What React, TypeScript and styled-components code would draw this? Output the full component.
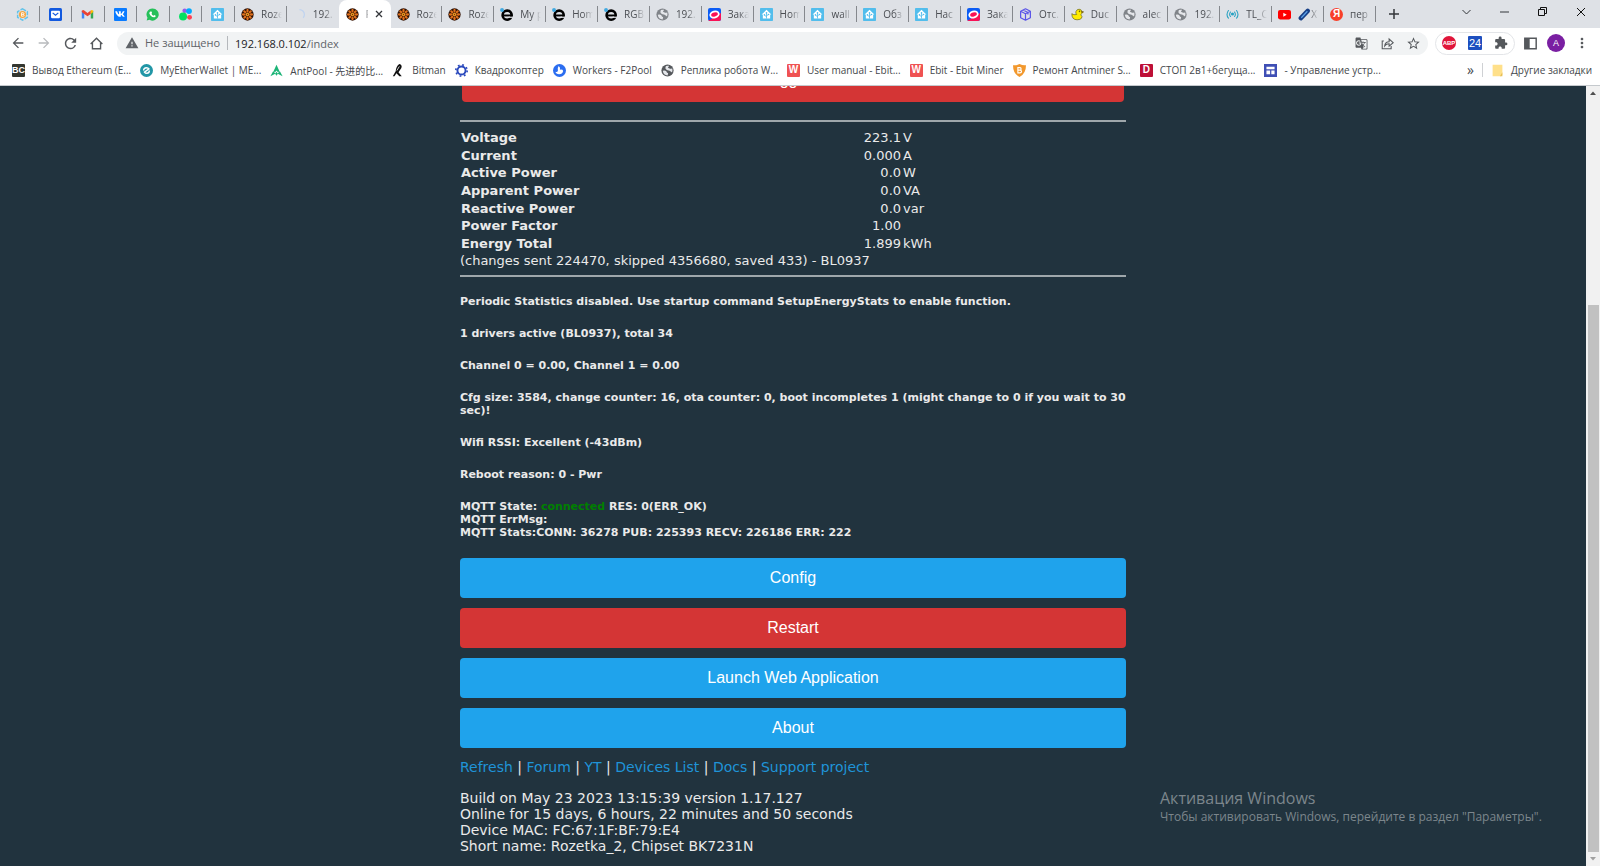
import React from 'react';
import styled, { createGlobalStyle, css } from 'styled-components';
import { MdArrowBack, MdArrowForward, MdRefresh, MdWarning, MdGTranslate, MdStarBorder, MdExtension, MdMoreVert } from 'react-icons/md';
import { FaVk } from 'react-icons/fa';

const uiFont = '"Open Sans", "Noto Sans", "Noto Sans CJK SC", sans-serif';
const pageFont = '"DejaVu Sans", Verdana, sans-serif';

const GlobalStyle = createGlobalStyle`
  * { box-sizing: border-box; }
  body { margin: 0; background: #21333e; }
  button, input { font: inherit; border: 0; padding: 0; margin: 0; background: none; color: inherit; }
`;

/* ---------- browser chrome ---------- */

const Window = styled.div`
  display: flex;
  flex-direction: column;
  height: 100vh;
  overflow: hidden;
  font-family: ${uiFont};
`;

const TabStrip = styled.div`
  display: flex;
  align-items: stretch;
  height: 28px;
  padding-left: 7px;
  background: #dee1e6;
  color: #4a4d52;
  font-size: 10px;
`;

const TabGroup = styled.div<{ $basis: number }>`
  display: flex;
  flex: 0 1 ${p => p.$basis}px;
  min-width: 0;
`;

const Tab = styled.button<{ $active?: boolean; $pinned?: boolean; $plain?: boolean }>`
  position: relative;
  flex: 1 1 30px;
  min-width: 0;
  display: flex;
  align-items: center;
  gap: 7px;
  padding: ${p => (p.$pinned ? '0 9px' : '0 4px 0 6px')};
  border-radius: 8px 8px 0 0;
  text-align: left;
  ${p => p.$active && css`background: #fff; padding: 0 8px 0 7px;`}
  ${p => !p.$active && !p.$plain && css`
    &::after {
      content: '';
      position: absolute;
      right: 0;
      top: 6px;
      width: 1px;
      height: 16px;
      background: #85888d;
    }
  `}
`;

const TabTitle = styled.span`
  display: flex;
  align-items: center;
  flex: 1;
  min-width: 0;
  overflow: hidden;
  white-space: nowrap;
  mask-image: linear-gradient(90deg, #000 50%, transparent 95%);
`;

const StripButton = styled.button<{ $width: number }>`
  display: flex;
  align-items: center;
  justify-content: center;
  width: ${p => p.$width}px;
  color: #33363a;
`;

const WindowControls = styled.div`
  display: flex;
  height: 24px;
  margin-left: auto;
`;

const Toolbar = styled.div`
  display: flex;
  align-items: center;
  height: 30px;
  padding: 0 5px;
  background: #fff;
  color: #5f6368;
`;

const ToolButton = styled.button<{ $dim?: boolean }>`
  display: flex;
  align-items: center;
  justify-content: center;
  width: 26px;
  height: 24px;
  flex: none;
  color: ${p => (p.$dim ? '#b8babd' : '#55585c')};
`;

const AddressBar = styled.div`
  display: flex;
  align-items: center;
  flex: 1;
  height: 23px;
  margin: 0 7px 0 8px;
  padding: 0 2px 0 8px;
  border-radius: 12px;
  background: #f1f3f4;
  font-size: 11px;
`;

const Security = styled.button`
  display: flex;
  align-items: center;
  gap: 6px;
  padding-right: 7px;
  border-right: 1px solid #b5b8bc;
  line-height: 14px;
  color: #5f6368;
`;

const AddressInput = styled.input`
  field-sizing: content;
  margin-left: 7px;
  color: #202124;
  outline: 0;
`;

const AddressPath = styled.span`
  flex: 1;
`;

const ExtensionGroup = styled.div`
  display: flex;
  align-items: center;
  height: 23px;
  margin-right: 2px;
  border: 1px solid #e3e5e8;
  border-radius: 12px;
`;

const Badge = styled.span<{ $bg: string; $round?: boolean; $size?: number; $font?: number; $light?: boolean }>`
  display: flex;
  align-items: center;
  justify-content: center;
  flex: none;
  width: ${p => p.$size ?? 13}px;
  height: ${p => p.$size ?? 13}px;
  border-radius: ${p => (p.$round ? '50%' : '1px')};
  background: ${p => p.$bg};
  color: #fff;
  font-family: "Liberation Sans", sans-serif;
  font-weight: ${p => (p.$light ? 400 : 700)};
  font-size: ${p => p.$font ?? 10}px;
  line-height: 1;
`;

const Bookmarks = styled.nav`
  display: flex;
  align-items: center;
  gap: 9px;
  height: 28px;
  padding: 0 8px 3px 12px;
  border-bottom: 1px solid #c5c9cd;
  background: #fff;
  font-size: 10px;
`;

const Bookmark = styled.a`
  display: flex;
  align-items: center;
  gap: 7px;
  flex: none;
  color: #45484c;
  white-space: nowrap;
  text-decoration: none;
`;

const Overflow = styled.div`
  display: flex;
  align-items: center;
  gap: 8px;
  margin-left: auto;
  color: #45484c;
`;

const MoreBookmarks = styled.button`
  font-size: 14px;
  line-height: 14px;
`;

const Divider = styled.span`
  flex: none;
  width: 1px;
  height: 14px;
  background: #cfd1d4;
`;

/* ---------- page ---------- */

const Viewport = styled.div`
  position: relative;
  display: flex;
  flex: 1;
  min-height: 0;
  background: #21333e;
`;

const Scroller = styled.main`
  display: flex;
  flex: 1;
  flex-direction: column;
  justify-content: flex-end;
  align-items: center;
  overflow: hidden;
`;

const Content = styled.div`
  flex: none;
  width: 42%;
  min-width: 660px;
  padding-bottom: 12px;
  color: #eaeaea;
  font-family: ${pageFont};
  font-size: 13px;
  line-height: 16px;
`;

const ActionButton = styled.button<{ $danger?: boolean; $tall?: boolean }>`
  display: block;
  width: 100%;
  height: ${p => (p.$tall ? 44 : 40)}px;
  border-radius: 4px;
  background: ${p => (p.$danger ? '#d43535' : '#1fa3ec')};
  color: #fff;
  font-family: "Liberation Sans", Arial, sans-serif;
  font-size: 16px;
`;

const ToggleRow = styled.div`
  padding: 0 2px;
  margin-bottom: 18px;
`;

const Rule = styled.hr`
  height: 2px;
  margin: 0;
  border: 0;
  background: #9fa7ab;
`;

const Readings = styled.table`
  width: 100%;
  height: 123px;
  margin-top: 7px;
  border-collapse: collapse;
  table-layout: fixed;
  line-height: 17px;
  th, td { padding: 0 1px; text-align: left; }
`;

const Value = styled.td`
  && { text-align: right; }
`;

const Summary = styled.p`
  margin: 0 0 5px;
  line-height: 18px;
`;

const Status = styled.section`
  display: flex;
  flex-direction: column;
  gap: 19px;
  padding: 18px 0 19px;
`;

const StatusLine = styled.h5`
  margin: 0;
  font-size: 11px;
  line-height: 13px;
`;

const Connected = styled.span`
  color: #008000;
`;

const Actions = styled.div`
  display: flex;
  flex-direction: column;
  gap: 10px;
`;

const Links = styled.p`
  margin: 11px 0 15px;
  font-size: 14px;
`;

const PageLink = styled.a`
  color: #1f94d8;
  text-decoration: none;
`;

const BuildInfo = styled.p`
  margin: 0;
  font-size: 14px;
`;

const Watermark = styled.aside`
  position: absolute;
  right: 60px;
  bottom: 41px;
  width: 380px;
  color: #7c868c;
  font-size: 12px;
  line-height: 16px;
  white-space: nowrap;
`;

const WatermarkTitle = styled.div`
  font-size: 16px;
  line-height: 22px;
`;

const ScrollTrack = styled.div`
  display: flex;
  flex-direction: column;
  align-items: center;
  width: 14px;
  background: #f1f1f1;
`;

const ScrollArrow = styled.svg`
  flex: none;
  width: 14px;
  height: 14px;
`;

const ScrollSpace = styled.div`
  flex: 205 1 0;
`;

const ScrollThumb = styled.div`
  flex: 547 1 0;
  width: 11px;
  background: #c1c1c1;
`;

/* ---------- drawings ---------- */

const Icon = styled.svg`
  flex: none;
  width: 13px;
  height: 13px;
`;

const Bulb = () => (
  <Icon viewBox="0 0 16 16" fill="none">
    <path d="M8 1l6 3.500v7L8 15l-6-3.500v-7z" stroke="#62c3e8" strokeWidth="1.800" strokeDasharray="5 1.500" />
    <circle cx="8" cy="8" r="4.400" fill="#f4a640" />
    <path d="M6.800 5.800h2q1 .1 1 1t-1 1.100q1.200.1 1.200 1.100t-1.200 1.100h-2zM6.800 7.900h2" stroke="#fff" />
  </Icon>
);
const Mail = () => (
  <Icon viewBox="0 0 16 16"><rect width="16" height="16" rx="2" fill="#1259df" /><rect x="2.500" y="3.500" width="11" height="9" rx="1" fill="#fff" /><path d="M4.500 6L8 9l3.500-3" fill="none" stroke="#1259df" strokeWidth="1.500" /></Icon>
);
const Gmail = () => (
  <Icon viewBox="0 0 16 16">
    <path d="M1 3.500V13h3V6z" fill="#4285f4" /><path d="M15 3.500V13h-3V6z" fill="#34a853" />
    <path d="M1 3.500Q2.500 2 4 3l4 3.200L12 3v4.300L8 10.300 4 7.300 1 5z" fill="#ea4335" /><path d="M12 3q1.600-1 3 .5V5l-3 2.300z" fill="#fbbc04" />
  </Icon>
);
const Vk = () => <Badge $bg="#0a7bff"><FaVk size={10} /></Badge>;
const WhatsApp = () => (
  <Icon viewBox="0 0 16 16"><path d="M8 .5a7.500 7.500 0 11-3.600 14L.8 15.500l1-3.500A7.500 7.500 0 018 .5z" fill="#25c05a" /><path d="M5.500 4.200l1.300.2.7 1.800-.8 1q.9 1.700 2.500 2.300l.9-1 1.800.9q.1 2-1.900 2-2.500 0-4.500-2.300T4.200 5.800q.2-1.200 1.300-1.600z" fill="#fff" /></Icon>
);
const Dots = () => (
  <Icon viewBox="0 0 16 16"><circle cx="7" cy="3.500" r="2.800" fill="#965eeb" /><circle cx="12.300" cy="3.800" r="3.600" fill="#00aaff" /><circle cx="5" cy="10.500" r="4.900" fill="#04e061" /><circle cx="13" cy="11.500" r="3" fill="#ff4053" /></Icon>
);
const HomeAssistant = () => (
  <Icon viewBox="0 0 16 16">
    <rect width="16" height="16" rx="1" fill="#52bdec" /><path d="M8 2l6 6h-1.500v5h-9V8H2z" fill="#fff" />
    <path d="M8 13V6M8 11l-2.500-2.500M8 10l2.500-2.500" stroke="#52bdec" fill="none" /><circle cx="8" cy="6" r="1" fill="#52bdec" /><circle cx="5.500" cy="8.500" r="1" fill="#52bdec" /><circle cx="10.500" cy="8" r="1" fill="#52bdec" />
  </Icon>
);
const Flower = () => (
  <Icon viewBox="0 0 16 16">
    <circle cx="8" cy="8" r="7.600" fill="#2e1206" />
    {[0, 45, 90, 135, 180, 225, 270, 315].map(a => (
      <ellipse key={a} cx="8" cy="3.300" rx="1.400" ry="2.300" fill="#e0701c" transform={`rotate(${a} 8 8)`} />
    ))}
    <circle cx="8" cy="8" r="2.200" fill="#f0a021" /><circle cx="8" cy="8" r=".8" fill="#7a2d10" />
  </Icon>
);
const Spinner = () => <Icon viewBox="0 0 16 16" fill="none"><path d="M8 2a6 6 0 016 6 6 6 0 01-1.500 4" stroke="#bfd3f0" strokeWidth="1.500" /></Icon>;
const EdgeE = () => (
  <Icon viewBox="0 0 16 16" fill="none">
    <circle cx="8.800" cy="8.800" r="5.600" stroke="#000" strokeWidth="3.200" /><path d="M4 9.200h11" stroke="#000" strokeWidth="2.400" /><path d="M10.500 11.400h6" stroke="#dee1e6" strokeWidth="1.500" /><circle cx="2.500" cy="2.500" r="2.400" fill="#42a9e0" />
  </Icon>
);
const Globe = ({ color = '#808489' }: { color?: string }) => (
  <Icon viewBox="0 0 16 16"><circle cx="8" cy="8" r="7.500" fill={color} /><path d="M2.200 8.300q3-.8 4.600.8.200 1.800 2 2l-.6 2.900Q3 14 2.200 8.300zM6 2.500q2-.8 4-.2L8.500 4.500l2.700 1.300q1.400.2 2.600-.6.800 2.300-.2 5.200l-3-2.200-3.500-.8-1.800-2.200z" fill="#e4e6ea" /></Icon>
);
const Ozon = () => (
  <Icon viewBox="0 0 16 16"><rect width="16" height="16" rx="2.500" fill="#0b5cf5" /><path d="M0 16L16 6v7.500q0 2.500-2.500 2.500z" fill="#f91155" /><ellipse cx="8" cy="8" rx="5.300" ry="3.600" transform="rotate(-15 8 8)" fill="#f91155" stroke="#fff" strokeWidth="2.200" /></Icon>
);
const Cube = () => (
  <Icon viewBox="0 0 16 16" fill="none" stroke="#5b54e8" strokeWidth="1.500" strokeLinejoin="round"><path d="M8 1l6 3v8l-6 3-6-3V4zM2 4l6 3 6-3M8 7v8M5 2.500l6 3V8" /></Icon>
);
const Duck = () => (
  <Icon viewBox="0 0 16 16" stroke="#5e5a10" strokeWidth=".8"><path d="M1 7q2 2 6 1-1.500-1.500-1-3.500Q7 1.500 10 1.500T13.500 5q0 2-1.500 3.500 2.500 1.500 1 4-1.500 2-5.500 2Q1 14.500 1 7z" fill="#ffed00" /><path d="M13 4l2.500.8L13.500 6z" fill="#f28c1d" /><circle cx="10.500" cy="4" r=".6" fill="#000" /></Icon>
);
const Signal = () => (
  <Icon viewBox="0 0 16 16" fill="none" stroke="#25a1c2" strokeWidth="1.300" strokeLinecap="round"><path d="M3 3Q-.5 8 3 12.500M13 3q3.500 5 0 9.500M5.500 5q-2 3 0 5.500M10.500 5q2 3 0 5.500" /><circle cx="8" cy="7.500" r="1.200" fill="#25a1c2" /></Icon>
);
const YouTube = () => <Icon viewBox="0 0 16 16"><rect y="2.500" width="16" height="11.500" rx="2.500" fill="#f00" /><path d="M6.500 5.800v4.900l4.200-2.450z" fill="#fff" /></Icon>;
const Clip = () => <Icon viewBox="0 0 16 16" fill="none"><path d="M3.500 12.500L12 3.500" stroke="#173f86" strokeWidth="5.500" strokeLinecap="round" /><path d="M4 12l7.500-8" stroke="#5ea2e8" strokeWidth="1.500" /></Icon>;
const Home = () => <Icon viewBox="0 0 16 16" fill="none" stroke="currentColor" strokeWidth="1.700"><path d="M.8 8.500L8 1.500l7.200 7M3 7v7.500h10V7" /></Icon>;
const Share = () => <Icon viewBox="0 0 16 16" fill="none" stroke="currentColor" strokeWidth="1.300"><path d="M3.500 5H1.500v9.500h11V11M4.500 11q.5-5 5.500-5.200V2.500L15 7l-5 4.200V8.300Q6.500 8.300 4.500 11z" /></Icon>;
const SidePanel = () => <Icon viewBox="0 0 16 16"><path d="M1 1.500h14v13H1z" fill="none" stroke="currentColor" strokeWidth="1.800" /><path d="M1 1.500h6v13H1z" fill="currentColor" /></Icon>;
const Ring = () => <Icon viewBox="0 0 16 16" fill="none"><circle cx="8" cy="8" r="8" fill="#2196a6" /><path d="M4.500 8q0-3.500 3.500-3.500 2 0 3 1.500L5.500 10q1 1.500 3 1.500 3 0 3-3.500" stroke="#fff" strokeWidth="1.800" /></Icon>;
const Ant = () => <Icon viewBox="0 0 16 16"><path d="M8 1l3.500 7.500-1.500 2L8 8l-2 2.500-1.500-2zM4 8.500L6.500 12 .5 15zM12 8.500L9.500 12l6 3zM8 9.500l1.700 2.500L8 14.500 6.300 12z" fill="#1cb477" /></Icon>;
const Antbit = () => <Icon viewBox="0 0 16 16"><path d="M9 0q4 1 2.500 5L8 10l4 5h-3L5.500 11.500 3 15H1l3.500-6Q5 3 9 0z" fill="#111" /><path d="M9 3L6 8" stroke="#fff" /></Icon>;
const Drone = () => <Icon viewBox="0 0 16 16" fill="none" stroke="#2a49bd"><circle cx="8" cy="8" r="5" strokeWidth="2.400" /><circle cx="8" cy="8" r="7" strokeWidth="2" strokeDasharray="2.200 3.300" /></Icon>;
const F2Pool = () => <Icon viewBox="0 0 16 16"><circle cx="8" cy="8" r="8" fill="#2b6df0" /><path d="M7 2.500q2.500 2 1.500 4.500 3.500-.5 4 1.500-1 4-5 4-4 0-4.500-3Q5 10.500 6 8.500q-1-3.500 1-6z" fill="#fff" /></Icon>;
const Shield = () => <Icon viewBox="0 0 16 16"><path d="M0 1.500Q4 2 8 0q4 2 8 1.500Q16 12 8 16 0 12 0 1.500z" fill="#f2982d" /><path d="M6 4.500h2.500q1.500.2 1.500 1.500T8.500 7.500q2 .2 2 1.800T8.500 11H6zM6 7.500h2.500" fill="none" stroke="#fff" strokeWidth="1.400" /></Icon>;
const Board = () => <Icon viewBox="0 0 16 16"><rect width="16" height="16" fill="#3f4fb5" /><path d="M3 3.500h10v3H3zM3 8h4.500v4.500H3zM9 8h4v4.500H9z" fill="#fff" /></Icon>;
const Folder = () => <Icon viewBox="0 0 16 16"><path d="M2 1h12v12l-2 2H2z" fill="#ffe08a" /><path d="M14 10v5h-3z" fill="#e8bf55" /></Icon>;

/* ---------- data ---------- */

const pinned: [string, React.ReactNode][] = [
  ['Mining', <Bulb />], ['Mail', <Mail />], ['Gmail', <Gmail />], ['VK', <Vk />],
  ['WhatsApp', <WhatsApp />], ['Avito', <Dots />], ['Home Assistant', <HomeAssistant />],
];

type TabData = { icon: React.ReactNode; title: React.ReactNode; active?: boolean; plain?: boolean };
const tabs: TabData[] = [
  { icon: <Flower />, title: 'Roze' },
  { icon: <Spinner />, title: '192.', plain: true },
  { icon: <Flower />, title: 'R', active: true },
  { icon: <Flower />, title: 'Roze' },
  { icon: <Flower />, title: 'Roze' },
  { icon: <EdgeE />, title: 'My p' },
  { icon: <EdgeE />, title: 'Hom' },
  { icon: <EdgeE />, title: 'RGB' },
  { icon: <Globe />, title: '192.' },
  { icon: <Ozon />, title: 'Зака' },
  { icon: <HomeAssistant />, title: 'Hom' },
  { icon: <HomeAssistant />, title: 'wall' },
  { icon: <HomeAssistant />, title: 'Обз' },
  { icon: <HomeAssistant />, title: 'Нас' },
  { icon: <Ozon />, title: 'Зака' },
  { icon: <Cube />, title: 'Отс.' },
  { icon: <Duck />, title: 'Duc' },
  { icon: <Globe />, title: 'alec' },
  { icon: <Globe />, title: '192.' },
  { icon: <Signal />, title: 'TL_C' },
  { icon: <YouTube />, title: <><Clip />Х</> },
  { icon: <Badge $bg="#f8402a" $round>Я</Badge>, title: 'пер' },
];

const bookmarks: [React.ReactNode, string][] = [
  [<Badge $bg="#33362f" $font={9}>BC</Badge>, 'Вывод Ethereum (E...'],
  [<Ring />, 'MyEtherWallet | ME...'],
  [<Ant />, 'AntPool - 先进的比...'],
  [<Antbit />, 'Bitman'],
  [<Drone />, 'Квадрокоптер'],
  [<F2Pool />, 'Workers - F2Pool'],
  [<Globe color="#55585c" />, 'Реплика робота W...'],
  [<Badge $bg="#ef5252">W</Badge>, 'User manual - Ebit...'],
  [<Badge $bg="#ef5252">W</Badge>, 'Ebit - Ebit Miner'],
  [<Shield />, 'Ремонт Antminer S...'],
  [<Badge $bg="#bd0f36">D</Badge>, 'СТОП 2в1+бегуща...'],
  [<Board />, '- Управление устр...'],
];

const readings = [
  ['Voltage', '223.1', 'V'], ['Current', '0.000', 'A'], ['Active Power', '0.0', 'W'], ['Apparent Power', '0.0', 'VA'],
  ['Reactive Power', '0.0', 'var'], ['Power Factor', '1.00', ''], ['Energy Total', '1.899', 'kWh'],
];

const links = ['Refresh', 'Forum', 'YT', 'Devices List', 'Docs', 'Support project'];

export default function App() {
  return (
    <Window>
      <GlobalStyle />
      <TabStrip>
        <TabGroup $basis={228}>
          {pinned.map(([name, icon]) => <Tab key={name} $pinned aria-label={name}>{icon}</Tab>)}
        </TabGroup>
        <TabGroup $basis={1141}>
          {tabs.map((t, i) => (
            <Tab key={i} $active={t.active} $plain={t.plain}>
              {t.icon}<TabTitle>{t.title}</TabTitle>
              {t.active && <svg width="8" height="8" viewBox="0 0 8 8" stroke="#33363a" strokeWidth="1.300"><path d="M1 1l6 6M7 1L1 7" /></svg>}
            </Tab>
          ))}
        </TabGroup>
        <StripButton $width={36} aria-label="New tab">
          <svg width="10" height="10" viewBox="0 0 10 10" stroke="currentColor" strokeWidth="1.500"><path d="M5 0v10M0 5h10" /></svg>
        </StripButton>
        <WindowControls>
          <StripButton $width={38} aria-label="Search tabs"><svg width="9" height="6" fill="none" stroke="currentColor"><path d="M.5 1l4 4 4-4" /></svg></StripButton>
          <StripButton $width={38} aria-label="Minimize"><svg width="9" height="2"><path d="M0 1h9" stroke="currentColor" /></svg></StripButton>
          <StripButton $width={39} aria-label="Restore"><svg width="10" height="10" fill="none" stroke="#111"><path d="M.5 2.500h6v6h-6zM2.500 2.500v-2h6v6h-2" /></svg></StripButton>
          <StripButton $width={38} aria-label="Close"><svg width="10" height="10" stroke="#111"><path d="M1 1l8 8M9 1L1 9" /></svg></StripButton>
        </WindowControls>
      </TabStrip>

      <Toolbar>
        <ToolButton aria-label="Back"><MdArrowBack size={16} /></ToolButton>
        <ToolButton $dim aria-label="Forward"><MdArrowForward size={16} /></ToolButton>
        <ToolButton aria-label="Reload"><MdRefresh size={17} /></ToolButton>
        <ToolButton aria-label="Home"><Home /></ToolButton>
        <AddressBar>
          <Security><MdWarning size={14} />Не защищено</Security>
          <AddressInput aria-label="Address" defaultValue="192.168.0.102" />
          <AddressPath>/index</AddressPath>
          <ToolButton aria-label="Translate"><MdGTranslate size={13} /></ToolButton>
          <ToolButton aria-label="Share"><Share /></ToolButton>
          <ToolButton aria-label="Bookmark"><MdStarBorder size={15} /></ToolButton>
        </AddressBar>
        <ExtensionGroup>
          <ToolButton aria-label="AdBlock"><Badge $bg="#e0153a" $round $size={14} $font={6}>ABP</Badge></ToolButton>
          <ToolButton aria-label="Calendar"><Badge $bg="#1d4fbf" $size={14} $font={11} $light>24</Badge></ToolButton>
          <ToolButton aria-label="Extensions"><MdExtension size={14} /></ToolButton>
        </ExtensionGroup>
        <ToolButton aria-label="Side panel"><SidePanel /></ToolButton>
        <ToolButton aria-label="Profile"><Badge $bg="#7a1fa2" $round $size={18} $font={9} $light>A</Badge></ToolButton>
        <ToolButton aria-label="Menu"><MdMoreVert size={16} /></ToolButton>
      </Toolbar>

      <Bookmarks>
        {bookmarks.map(([icon, label]) => (
          <Bookmark key={label} href="#">{icon}{label}</Bookmark>
        ))}
        <Overflow>
          <MoreBookmarks aria-label="More bookmarks">»</MoreBookmarks>
          <Divider />
          <Bookmark href="#"><Folder />Другие закладки</Bookmark>
        </Overflow>
      </Bookmarks>

      <Viewport>
        <Scroller>
          <Content>
            <ToggleRow><ActionButton $danger $tall>Toggle 1</ActionButton></ToggleRow>
            <Rule />
            <Readings>
              <colgroup><col /><col /><col width="224" /></colgroup>
              <tbody>
                {readings.map(([name, value, unit]) => (
                  <tr key={name}><th scope="row">{name}</th><Value>{value}</Value><td>{unit}</td></tr>
                ))}
              </tbody>
            </Readings>
            <Summary>(changes sent 224470, skipped 4356680, saved 433) - BL0937</Summary>
            <Rule />
            <Status>
              <StatusLine>Periodic Statistics disabled. Use startup command SetupEnergyStats to enable function.</StatusLine>
              <StatusLine>1 drivers active (BL0937), total 34</StatusLine>
              <StatusLine>Channel 0 = 0.00, Channel 1 = 0.00</StatusLine>
              <StatusLine>Cfg size: 3584, change counter: 16, ota counter: 0, boot incompletes 1 (might change to 0 if you wait to 30 sec)!</StatusLine>
              <StatusLine>Wifi RSSI: Excellent (-43dBm)</StatusLine>
              <StatusLine>Reboot reason: 0 - Pwr</StatusLine>
              <StatusLine>
                MQTT State: <Connected>connected</Connected> RES: 0(ERR_OK)<br />
                MQTT ErrMsg:<br />
                MQTT Stats:CONN: 36278 PUB: 225393 RECV: 226186 ERR: 222
              </StatusLine>
            </Status>
            <Actions>
              <ActionButton>Config</ActionButton>
              <ActionButton $danger>Restart</ActionButton>
              <ActionButton>Launch Web Application</ActionButton>
              <ActionButton>About</ActionButton>
            </Actions>
            <Links>
              {links.map((l, i) => <React.Fragment key={l}>{i > 0 && ' | '}<PageLink href="#">{l}</PageLink></React.Fragment>)}
            </Links>
            <BuildInfo>
              Build on May 23 2023 13:15:39 version 1.17.127<br />
              Online for 15 days, 6 hours, 22 minutes and 50 seconds<br />
              Device MAC: FC:67:1F:BF:79:E4<br />
              Short name: Rozetka_2, Chipset BK7231N
            </BuildInfo>
          </Content>
        </Scroller>
        <Watermark>
          <WatermarkTitle>Активация Windows</WatermarkTitle>
          Чтобы активировать Windows, перейдите в раздел "Параметры".
        </Watermark>
        <ScrollTrack>
          <ScrollArrow viewBox="0 0 14 14"><path d="M4 9l3-3.500L10 9z" fill="#505050" /></ScrollArrow>
          <ScrollSpace />
          <ScrollThumb />
          <ScrollArrow viewBox="0 0 14 14"><path d="M4 5l3 3.500L10 5z" fill="#a0a0a0" /></ScrollArrow>
        </ScrollTrack>
      </Viewport>
    </Window>
  );
}
